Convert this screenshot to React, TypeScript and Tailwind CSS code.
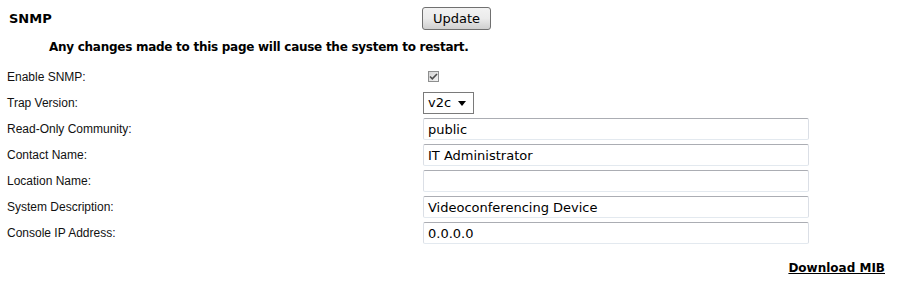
import React from "react";

const verdana = "font-['DejaVu_Sans','Verdana',sans-serif]";
const arial = "font-['Liberation_Sans','Arial',sans-serif]";

function TextBox({ value }: { value: string }) {
  return (
    <div
      className={`h-[22px] w-[386px] rounded-[2px] border border-t-[#abadb3] border-l-[#dbdfe6] border-r-[#dbdfe6] border-b-[#e3e9ef] bg-white pl-[4px] pt-[1px] text-[13px] leading-[20px] text-black ${verdana}`}
    >
      {value}
    </div>
  );
}

function Row({ label, children, h = "h-[26px]" }: { label: string; children: React.ReactNode; h?: string }) {
  return (
    <div className={`flex items-center ${h}`}>
      <div className={`w-[423px] pl-[7px] text-[12px] text-[#111] ${arial}`}>{label}</div>
      <div className="flex items-center">{children}</div>
    </div>
  );
}

export default function App() {
  return (
    <div className="relative h-[289px] w-[898px] bg-white">
      <div className="flex h-[37px] items-start pt-[7px]">
        <div className={`w-[422px] pl-[9px] pt-[3px] text-[13px] font-bold leading-[17px] text-black ${verdana}`}>SNMP</div>
        <button
          className={`h-[23px] w-[69px] rounded-[3px] border border-[#707070] bg-gradient-to-b from-[#f2f2f2] via-[#ebebeb] to-[#cfcfcf] text-[13px] leading-[20px] text-black ${verdana}`}
        >
          Update
        </button>
      </div>
      <div className={`h-[26px] pl-[49px] pt-[2px] text-[12px] font-bold leading-[16px] tracking-[-0.27px] text-black ${verdana}`}>
        Any changes made to this page will cause the system to restart.
      </div>
      <Row label="Enable SNMP:" h="h-[27px]">
        <div className="ml-[5px] flex h-[11px] w-[11px] items-center justify-center border border-[#8e8f8f] bg-gradient-to-br from-[#d4d4d4] to-[#f4f4f4]">
          <svg width="9" height="9" viewBox="0 0 9 9">
            <path d="M1 4.5 L3.3 6.8 L8 2" fill="none" stroke="#4d4d4d" strokeWidth="1.6" />
          </svg>
        </div>
      </Row>
      <Row label="Trap Version:">
        <div
          className={`flex h-[22px] w-[51px] items-center justify-between border border-[#7a7a7a] bg-white pl-[4px] pr-[7px] text-[13px] text-black ${verdana}`}
        >
          <span>v2c</span>
          <svg width="8" height="5" viewBox="0 0 8 5">
            <path d="M0 0 H8 L4 5 Z" fill="#000" />
          </svg>
        </div>
      </Row>
      <Row label="Read-Only Community:">
        <TextBox value="public" />
      </Row>
      <Row label="Contact Name:">
        <TextBox value="IT Administrator" />
      </Row>
      <Row label="Location Name:">
        <TextBox value="" />
      </Row>
      <Row label="System Description:">
        <TextBox value="Videoconferencing Device" />
      </Row>
      <Row label="Console IP Address:">
        <TextBox value="0.0.0.0" />
      </Row>
      <div className="flex justify-end pr-[13px] pt-[14px]">
        <a className={`text-[12px] font-bold leading-[16px] text-black underline ${verdana}`}>Download MIB</a>
      </div>
    </div>
  );
}
